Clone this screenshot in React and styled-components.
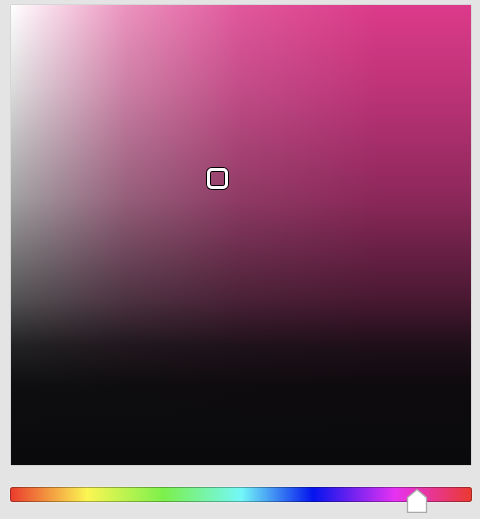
import styled, { createGlobalStyle } from "styled-components";

const GlobalStyle = createGlobalStyle`
  html, body {
    margin: 0;
    padding: 0;
    background: #e4e4e4;
    font-family: "Liberation Sans", Arial, sans-serif;
  }
`;

const HUE = "#dc3a8a";

function App() {
  return (
    <Picker>
      <GlobalStyle />
      <SatValue $hue={HUE}>
        <Whiteness />
        <Blackness />
        <Cursor $x={196} $y={163} />
      </SatValue>
      <HueTrack>
        <HueBar />
        <HueThumb $pos={0.881}>
          <svg width="22" height="26" viewBox="0 0 22 26">
            <path
              d="M11 1.5 L20.5 9.5 V24.5 H1.5 V9.5 Z"
              fill="#fff"
              stroke="#a9a9a9"
              strokeWidth="1.3"
              strokeLinejoin="round"
            />
          </svg>
        </HueThumb>
      </HueTrack>
    </Picker>
  );
}

const Picker = styled.div`
  display: flex;
  flex-direction: column;
  width: 462px;
  padding: 5px 8px 0 10px;
  gap: 22px;
`;

const SatValue = styled.div`
  position: relative;
  width: 460px;
  height: 460px;
  margin-left: 1px;
  background: ${({ $hue }) => $hue};
  box-shadow: 0 0 1px rgba(0, 0, 0, 0.35);
  overflow: hidden;
`;

const Whiteness = styled.div`
  position: absolute;
  inset: 0;
  background: linear-gradient(
    to right,
    #ffffff 0%,
    rgba(255, 255, 255, 0.45) 25%,
    rgba(255, 255, 255, 0.15) 50%,
    rgba(255, 255, 255, 0) 80%
  );
`;

const Blackness = styled.div`
  position: absolute;
  inset: 0;
  background: linear-gradient(
    to bottom,
    rgba(10, 10, 12, 0) 0%,
    rgba(10, 10, 12, 0.14) 18%,
    rgba(10, 10, 12, 0.38) 42%,
    rgba(10, 10, 12, 0.7) 64%,
    rgba(10, 10, 12, 0.9) 74%,
    rgba(10, 10, 12, 0.985) 83%,
    rgba(10, 10, 12, 1) 100%
  );
`;

const Cursor = styled.div`
  position: absolute;
  left: ${({ $x }) => $x}px;
  top: ${({ $y }) => $y}px;
  width: 21px;
  height: 21px;
  box-sizing: border-box;
  border: 3px solid #fff;
  border-radius: 5px;
  box-shadow: 0 0 0 1px #000, inset 0 0 0 1px #000;
`;

const HueTrack = styled.div`
  position: relative;
  width: 462px;
  height: 26px;
`;

const HueBar = styled.div`
  height: 15px;
  border-radius: 3px;
  background: linear-gradient(
    to right,
    #ea3a2d 0%,
    #fbf653 16.7%,
    #7cf04c 33.3%,
    #74f8f8 50%,
    #0414ee 65.6%,
    #e632f2 83.3%,
    #ea3a2d 100%
  );
  box-shadow: inset 0 0 0 1px rgba(0, 0, 0, 0.3), 0 0 2px rgba(255, 255, 255, 0.9);
`;

const HueThumb = styled.div`
  position: absolute;
  top: 1px;
  left: ${({ $pos }) => `calc(${$pos * 100}% - 11px)`};
  width: 22px;
  height: 26px;
  svg {
    display: block;
  }
`;

export default App;
